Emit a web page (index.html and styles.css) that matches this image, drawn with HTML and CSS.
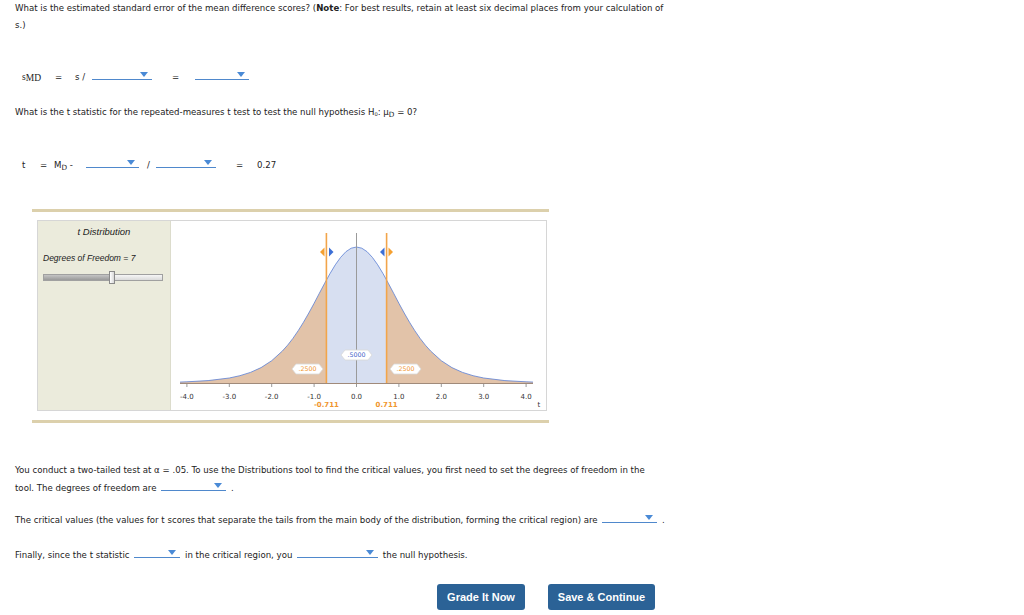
FILE: index.html
```html
<!DOCTYPE html>
<html>
<head>
<meta charset="utf-8">
<link rel="stylesheet" href="styles.css">
</head>
<body>
<div class="page">
  <p class="q">What is the estimated standard error of the mean difference scores? (<b>Note</b>: For best results, retain at least six decimal places from your calculation of<br>s.)</p>

  <div class="formula f1">
    <span class="c serif w-smd">s<sub>MD</sub></span>
    <span class="c w-eq1">=</span>
    <span class="c w-s">s /</span>
    <span class="dd w60"></span>
    <span class="c eq2">=</span>
    <span class="dd w54"></span>
  </div>

  <p class="q q2">What is the t statistic for the repeated-measures t test to test the null hypothesis H<sub class="tiny">0</sub>: μ<sub>D</sub> = 0?</p>

  <div class="formula f2">
    <span class="c w-t">t</span>
    <span class="c w-eq3">=</span>
    <span class="c w-md">M<sub>D</sub> -</span>
    <span class="dd w53"></span>
    <span class="c w-slash">/</span>
    <span class="dd w60"></span>
    <span class="c eq4">=</span>
    <span class="c">0.27</span>
  </div>

  <div class="rule"></div>

  <div class="panel">
    <div class="side">
      <div class="side-title">t Distribution</div>
      <div class="side-dof">Degrees of Freedom = 7</div>
      <div class="slider"><div class="slider-fill"></div><div class="slider-thumb"></div></div>
    </div>
    <svg class="chart" width="374" height="189" viewBox="172 221 374 189">
      <path class="tail" d="M181,383 L181,382.1 L187.9,381.8 L209.1,380.6 L230.3,378.0 L240.9,375.7 L251.5,372.4 L262.1,367.6 L272.7,360.7 L283.3,351.1 L288.6,345.2 L293.9,338.4 L299.2,330.7 L304.5,322.2 L309.8,313.0 L315.1,303.3 L320.4,293.2 L325.7,283.2 L327.4,280.1 L327.4,383 Z"/>
      <path class="tail" d="M534,383 L534,382.1 L527.1,381.8 L505.9,380.6 L484.7,378.0 L474.1,375.7 L463.5,372.4 L452.9,367.6 L442.3,360.7 L431.7,351.1 L426.4,345.2 L421.1,338.4 L415.8,330.7 L410.5,322.2 L405.2,313.0 L399.9,303.3 L394.6,293.2 L389.3,283.2 L387.6,280.1 L387.6,383 Z"/>
      <path class="mid" d="M327.4,383 L327.4,280.1 L331.0,273.6 L336.3,264.8 L341.6,257.4 L346.9,251.7 L352.2,248.2 L357.5,247.0 L362.8,248.2 L368.1,251.7 L373.4,257.4 L378.7,264.8 L384.0,273.6 L387.6,280.1 L387.6,383 Z"/>
      <path class="curve" d="M181,382.1 L187.9,381.8 L209.1,380.6 L230.3,378.0 L240.9,375.7 L251.5,372.4 L262.1,367.6 L272.7,360.7 L283.3,351.1 L288.6,345.2 L293.9,338.4 L299.2,330.7 L304.5,322.2 L309.8,313.0 L315.1,303.3 L320.4,293.2 L325.7,283.2 L331.0,273.6 L336.3,264.8 L341.6,257.4 L346.9,251.7 L352.2,248.2 L357.5,247.0 L362.8,248.2 L368.1,251.7 L373.4,257.4 L378.7,264.8 L384.0,273.6 L389.3,283.2 L394.6,293.2 L399.9,303.3 L405.2,313.0 L410.5,322.2 L415.8,330.7 L421.1,338.4 L426.4,345.2 L431.7,351.1 L442.3,360.7 L452.9,367.6 L463.5,372.4 L474.1,375.7 L484.7,378.0 L505.9,380.6 L527.1,381.8 L534,382.1"/>
      <line class="center" x1="357.5" y1="233" x2="357.5" y2="383"/>
      <line class="crit" x1="327.4" y1="233" x2="327.4" y2="383"/>
      <line class="crit" x1="387.6" y1="233" x2="387.6" y2="383"/>
      <line class="axis" x1="181" y1="383.5" x2="534" y2="383.5"/>
      <g class="ticks">
        <line x1="187.9" y1="384" x2="187.9" y2="387"/>
        <line x1="230.3" y1="384" x2="230.3" y2="387"/>
        <line x1="272.7" y1="384" x2="272.7" y2="387"/>
        <line x1="315.1" y1="384" x2="315.1" y2="387"/>
        <line x1="357.5" y1="384" x2="357.5" y2="387"/>
        <line x1="399.9" y1="384" x2="399.9" y2="387"/>
        <line x1="442.3" y1="384" x2="442.3" y2="387"/>
        <line x1="484.7" y1="384" x2="484.7" y2="387"/>
        <line x1="527.1" y1="384" x2="527.1" y2="387"/>
      </g>
      <g class="tlabels">
        <text x="187.9" y="398.5">-4.0</text>
        <text x="230.3" y="398.5">-3.0</text>
        <text x="272.7" y="398.5">-2.0</text>
        <text x="315.1" y="398.5">-1.0</text>
        <text x="357.5" y="398.5">0.0</text>
        <text x="399.9" y="398.5">1.0</text>
        <text x="442.3" y="398.5">2.0</text>
        <text x="484.7" y="398.5">3.0</text>
        <text x="527.1" y="398.5">4.0</text>
      </g>
      <text class="cval" x="327.4" y="406.5">-0.711</text>
      <text class="cval" x="387.6" y="406.5">0.711</text>
      <text class="tlab" x="538.5" y="406.5">t</text>
      <polygon class="h-or" points="321,252 325.5,247.5 325.5,256.5"/>
      <polygon class="h-bl" points="334.5,252 330,247.5 330,256.5"/>
      <polygon class="h-bl" points="381,252 385.5,247.5 385.5,256.5"/>
      <polygon class="h-or" points="394,252 389.5,247.5 389.5,256.5"/>
      <path class="tag" d="M346,350 H369 L373,355 L369,360 H346 L342,355 Z"/>
      <path class="tag" d="M297,364 H320 L324,369 L320,374 H297 L293,369 Z"/>
      <path class="tag" d="M395,364 H418 L422,369 L418,374 H395 L391,369 Z"/>
      <text class="tag-b" x="357.5" y="357.3">.5000</text>
      <text class="tag-o" x="308.5" y="371.3">.2500</text>
      <text class="tag-o" x="406.5" y="371.3">.2500</text>
    </svg>
  </div>

  <div class="rule rule2"></div>

  <p class="q q3">You conduct a two-tailed test at α = .05. To use the Distributions tool to find the critical values, you first need to set the degrees of freedom in the<br>tool. The degrees of freedom are <span class="dd w65"></span> .</p>

  <p class="q q4">The critical values (the values for t scores that separate the tails from the main body of the distribution, forming the critical region) are <span class="dd w55"></span> .</p>

  <p class="q q5">Finally, since the t statistic <span class="dd w46"></span> in the critical region, you <span class="dd w81"></span> the null hypothesis.</p>

  <div class="actions">
    <button class="btn btn-grade">Grade It Now</button>
    <button class="btn btn-save">Save &amp; Continue</button>
  </div>
</div>
</body>
</html>
```

FILE: styles.css
```css
body {
  margin: 0;
  font-family: "DejaVu Sans", Verdana, sans-serif;
  font-size: 8.6px;
  color: #222;
  background: #fff;
}

.page {
  padding-left: 15px;
}

.q {
  margin: 0;
  line-height: 17px;
  white-space: nowrap;
}

.q b {
  font-weight: bold;
}

sub {
  font-size: 0.85em;
  vertical-align: -2px;
  line-height: 0;
}

sub.tiny {
  font-size: 0.6em;
  vertical-align: -1px;
}

.formula {
  display: flex;
  align-items: baseline;
  height: 17px;
  line-height: 17px;
  padding-left: 7px;
}

.c {
  display: inline-block;
}

.serif {
  font-family: "Liberation Serif", "Times New Roman", serif;
  font-size: 9.5px;
}

.serif sub {
  font-size: 9.5px;
  vertical-align: -1px;
}

.f1 {
  margin-top: 35px;
}

.w-smd { width: 33px; }
.w-eq1 { width: 20px; }
.w-s { width: 17px; }
.eq2 { margin-left: 20px; width: 23px; }

.q2 {
  margin-top: 18px;
}

.f2 {
  margin-top: 36px;
}

.w-t { width: 18px; }
.w-eq3 { width: 14px; }
.w-md { width: 32px; }
.w-slash { width: 17px; padding-left: 8px; box-sizing: border-box; }
.eq4 { margin-left: 20px; width: 21px; }

.dd {
  display: inline-block;
  position: relative;
  height: 9px;
  border-bottom: 1px solid #4f88cc;
  margin: 0 2px;
}

.formula .dd {
  margin: 0;
}

.dd::after {
  content: "";
  position: absolute;
  right: 4px;
  top: 2px;
  border-left: 4px solid transparent;
  border-right: 4px solid transparent;
  border-top: 5px solid #4a8ad6;
}

.w46 { width: 46px; }
.w53 { width: 53px; }
.w54 { width: 54px; }
.w55 { width: 55px; }
.w60 { width: 60px; }
.w65 { width: 65px; }
.w81 { width: 81px; }

.rule {
  margin-top: 35px;
  margin-left: 17px;
  width: 517px;
  height: 3px;
  background: #dcd0ac;
}

.rule2 {
  margin-top: 9px;
}

.panel {
  margin-top: 8px;
  margin-left: 22px;
  width: 508px;
  height: 189px;
  border: 1px solid #d6d6d6;
  display: flex;
}

.side {
  width: 133px;
  background: #ebebdc;
  border-right: 1px solid #dcdccc;
  font-family: "Liberation Sans", Arial, sans-serif;
  font-style: italic;
  color: #222;
  padding: 5px 0 0 5px;
  box-sizing: border-box;
}

.side-title {
  font-size: 9.5px;
  line-height: 12px;
  text-align: center;
  padding-right: 5px;
}

.side-dof {
  margin-top: 14px;
  font-size: 8.5px;
  line-height: 12px;
}

.slider {
  position: relative;
  margin-top: 10px;
  width: 118px;
  height: 5px;
  border: 1px solid #a0a0a0;
  background: linear-gradient(#f6f6f6, #dadada);
}

.slider-fill {
  width: 66px;
  height: 5px;
  background: linear-gradient(#c4c4c4, #9a9a9a);
}

.slider-thumb {
  position: absolute;
  left: 65px;
  top: -4px;
  width: 4px;
  height: 11px;
  border: 1px solid #8a8a8a;
  background: linear-gradient(90deg, #ffffff, #d8d8d8);
}

.chart {
  display: block;
  background: #fff;
}

.tail { fill: #e2c3a9; }
.mid { fill: #d7dff1; }
.curve { fill: none; stroke: #5b7fd4; stroke-width: 0.8; }
.center { stroke: #9a9a9a; stroke-width: 1; }
.crit { stroke: #f2a54a; stroke-width: 1.6; }
.axis { stroke: #a08a7a; stroke-width: 1; }
.ticks line { stroke: #999; stroke-width: 1; }

.tlabels text {
  font-family: "DejaVu Sans", Verdana, sans-serif;
  font-size: 7px;
  fill: #333;
  text-anchor: middle;
}

.cval {
  font-family: "DejaVu Sans", Verdana, sans-serif;
  font-size: 7px;
  font-weight: bold;
  fill: #f0962f;
  text-anchor: middle;
}

.tlab {
  font-family: "DejaVu Sans", Verdana, sans-serif;
  font-size: 7px;
  fill: #333;
}

.h-or { fill: #f5a030; }
.h-bl { fill: #3c6fd6; }

.tag {
  fill: #fff;
  stroke: #d8d8d8;
  stroke-width: 0.8;
}

.tag-b, .tag-o {
  font-family: "DejaVu Sans", Verdana, sans-serif;
  font-size: 6.3px;
  text-anchor: middle;
}

.tag-b { fill: #3e63c8; }
.tag-o { fill: #f0962f; }

.q3 {
  margin-top: 38px;
  line-height: 18px;
}

.q4 {
  margin-top: 15px;
}

.q5 {
  margin-top: 18px;
}

.actions {
  margin-top: 20px;
  width: 640px;
  display: flex;
  justify-content: flex-end;
  gap: 23px;
}

.btn {
  height: 26px;
  border: none;
  border-radius: 3px;
  background: #2b6296;
  color: #fff;
  font-family: "Liberation Sans", Arial, sans-serif;
  font-weight: bold;
  font-size: 11px;
  padding: 0;
}

.btn-grade { width: 88px; }
.btn-save { width: 107px; }
```
